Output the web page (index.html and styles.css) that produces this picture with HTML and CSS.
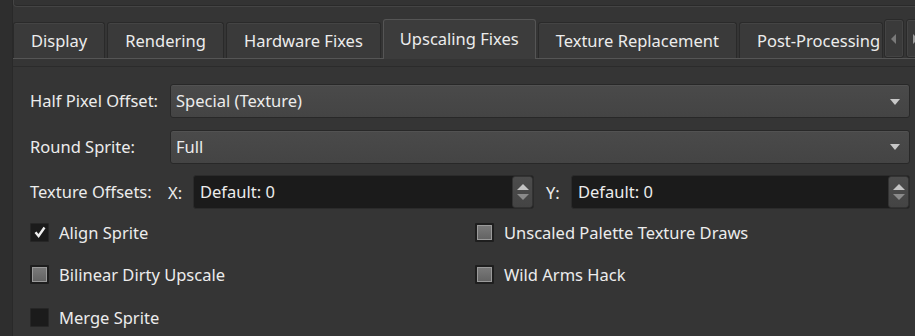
FILE: index.html
```html
<!DOCTYPE html>
<html>
<head>
<meta charset="utf-8">
<link rel="stylesheet" href="styles.css">
</head>
<body>
<div class="window">
  <div class="prev-box"></div>
  <div class="tabbar">
    <div class="tab">Display</div>
    <div class="tab">Rendering</div>
    <div class="tab">Hardware Fixes</div>
    <div class="tab tab-active">Upscaling Fixes</div>
    <div class="tab">Texture Replacement</div>
    <div class="tab tab-last">Post-Processing</div>
    <div class="scroll-btn"><span class="arrow-left"></span></div>
    <div class="scroll-btn scroll-right"><span class="arrow-right"></span></div>
  </div>
  <div class="panel">
    <div class="form">
      <div class="label">Half Pixel Offset:</div>
      <div class="combo"><span>Special (Texture)</span><span class="combo-arrow"></span></div>
      <div class="label">Round Sprite:</div>
      <div class="combo"><span>Full</span><span class="combo-arrow"></span></div>
      <div class="label">Texture Offsets:</div>
      <div class="offsets">
        <span class="axis">X:</span>
        <div class="spin spin-x"><span class="spin-text">Default: 0</span><span class="spin-btns"><span class="up"></span><span class="down"></span></span></div>
        <span class="axis axis-y">Y:</span>
        <div class="spin spin-y"><span class="spin-text">Default: 0</span><span class="spin-btns"><span class="up"></span><span class="down"></span></span></div>
      </div>
    </div>
    <div class="checks">
      <label class="check"><span class="box box-checked"><svg width="14" height="14" viewBox="0 0 14 14"><path d="M2.5 7.2 L5.6 11 L11.5 2.5" fill="none" stroke="#f0f0f0" stroke-width="2.4" stroke-linejoin="miter"/></svg></span>Align Sprite</label>
      <label class="check"><span class="box box-gray"></span>Unscaled Palette Texture Draws</label>
      <label class="check"><span class="box box-gray"></span>Bilinear Dirty Upscale</label>
      <label class="check"><span class="box box-gray"></span>Wild Arms Hack</label>
      <label class="check"><span class="box box-empty"></span>Merge Sprite</label>
    </div>
  </div>
</div>
</body>
</html>
```
FILE: styles.css
```css
* { box-sizing: border-box; }
html, body {
  margin: 0;
  padding: 0;
  width: 915px;
  height: 336px;
  overflow: hidden;
  background: #2e2e2e;
  font-family: "Noto Sans", "Open Sans", sans-serif;
  font-size: 16.5px;
  color: #ececec;
}
.window {
  margin-left: 12px;
  height: 336px;
  background: #353535;
  border-left: 1px solid #292929;
  display: flex;
  flex-direction: column;
}
.prev-box {
  height: 9px;
  margin-top: -2px;
  margin-right: -6px;
  border: 1px solid #444;
  border-top: none;
  border-radius: 0 0 4px 4px;
  background: #333;
  box-shadow: inset 0 -1px 0 #2a2a2a;
  flex-shrink: 0;
}
.tabbar {
  margin-top: 12px;
  height: 40px;
  flex-shrink: 0;
  display: flex;
  align-items: flex-end;
  border-bottom: 1px solid #555;
  white-space: nowrap;
}
.tab {
  height: 36px;
  padding: 0 17px 0 17px;
  margin-right: 2px;
  background: #3a3a3a;
  border: 1px solid #2a2a2a;
  border-bottom: none;
  border-radius: 3px 3px 0 0;
  display: flex;
  align-items: center;
  flex-shrink: 0;
  box-shadow: inset 0 1px 0 #444;
}
.tab-active {
  height: 40px;
  margin-bottom: -1px;
  background: #3c3c3c;
  padding: 0 16px 3px 16px;
  border-color: #555;
  box-shadow: none;
}
.tab-last {
  margin-right: 1px;
  padding-right: 0;
  width: 144px;
  overflow: hidden;
}
.scroll-btn {
  width: 20px;
  height: 39px;
  flex-shrink: 0;
  background: #3a3a3a;
  border: 1px solid #2a2a2a;
  border-radius: 3px;
  margin-right: 2px;
  display: flex;
  align-items: center;
  justify-content: center;
  box-shadow: inset 0 0 0 1px #444;
}
.arrow-left {
  width: 0; height: 0;
  border-top: 5px solid transparent;
  border-bottom: 5px solid transparent;
  border-right: 5px solid #7a7a7a;
}
.arrow-right {
  width: 0; height: 0;
  border-top: 5px solid transparent;
  border-bottom: 5px solid transparent;
  border-left: 5px solid #9a9a9a;
}
.panel {
  margin-top: 7px;
  flex: 1;
  border-top: 1px solid #2b2b2b;
  padding: 17px 7px 0 17px;
}
.form {
  display: grid;
  grid-template-columns: 140px 1fr;
  row-gap: 11.5px;
  align-items: center;
}
.label { white-space: nowrap; padding-bottom: 1px; }
.combo {
  height: 34px;
  border: 1px solid #282828;
  border-radius: 3px;
  background: linear-gradient(#4a4a4a, #444);
  box-shadow: inset 0 1px 0 #525252;
  display: flex;
  align-items: center;
  justify-content: space-between;
  padding: 0 9px 1px 5px;
}
.combo-arrow {
  width: 0; height: 0;
  border-left: 5px solid transparent;
  border-right: 5px solid transparent;
  border-top: 6px solid #c8c8c8;
  margin-top: 2px;
}
.offsets {
  display: flex;
  align-items: center;
  margin-left: -2px;
}
.axis { width: 25px; flex-shrink: 0; }
.axis-y { width: 25px; margin-left: 12px; }
.spin {
  height: 34px;
  background: #1b1b1b;
  border: 1px solid #2b2b2b;
  border-radius: 3px;
  display: flex;
  align-items: center;
  justify-content: space-between;
  padding-left: 6px;
}
.spin-x { width: 341px; }
.spin-y { width: 339px; }
.spin-text { padding-bottom: 1px; }
.spin-btns {
  width: 21px;
  height: 32px;
  background: linear-gradient(#4c4c4c, #444);
  border: 1px solid #333;
  border-radius: 3px;
  display: flex;
  flex-direction: column;
  align-items: center;
  justify-content: center;
  gap: 4px;
}
.up {
  width: 0; height: 0;
  border-left: 6px solid transparent;
  border-right: 6px solid transparent;
  border-bottom: 6px solid #c4c4c4;
}
.down {
  width: 0; height: 0;
  border-left: 6px solid transparent;
  border-right: 6px solid transparent;
  border-top: 6px solid #8a8a8a;
}
.checks {
  margin-top: 13px;
  display: grid;
  grid-template-columns: 445px 1fr;
  row-gap: 22.5px;
}
.check {
  display: flex;
  align-items: center;
  gap: 10px;
  height: 20px;
  white-space: nowrap;
}
.box {
  width: 19px;
  height: 19px;
  flex-shrink: 0;
  border-radius: 1px;
  display: flex;
  align-items: center;
  justify-content: center;
}
.box-checked { background: #1b1b1b; border: 1px solid #262626; }
.box-empty { background: #1b1b1b; border: 1px solid #262626; }
.box-gray {
  background: linear-gradient(#7a7a7a, #626262);
  border: 2px solid #1e1e1e;
  box-shadow: inset 0 0 0 1px #9a9a9a;
}
```
